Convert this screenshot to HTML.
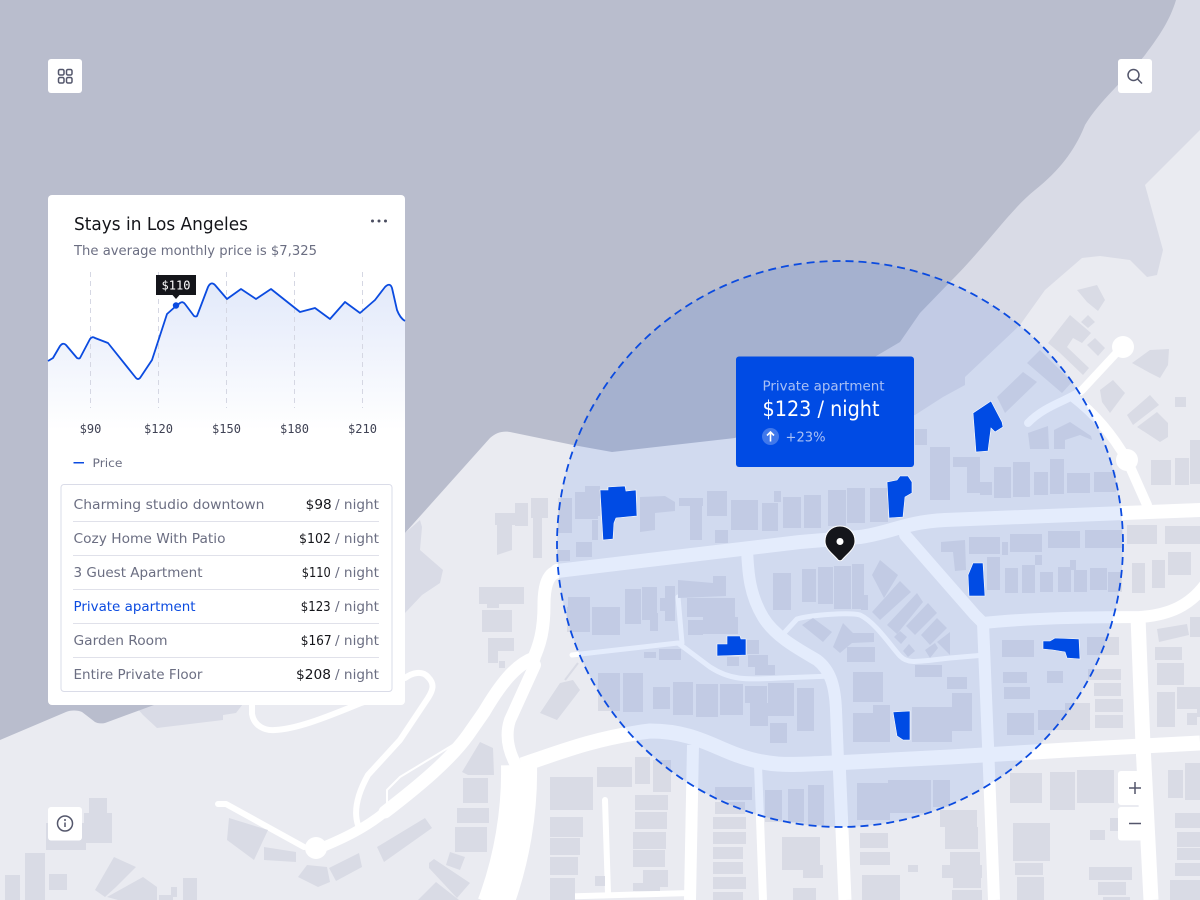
<!DOCTYPE html>
<html><head><meta charset="utf-8"><title>Stays in Los Angeles</title>
<style>
html,body{margin:0;padding:0;width:1200px;height:900px;overflow:hidden;background:#EAEBF1}
svg{display:block;font-family:"DejaVu Sans","Liberation Sans",sans-serif}
.m{font-family:"DejaVu Sans Mono","Liberation Mono",monospace;font-size:12px;fill:#3F4254}
.l{font-size:13.5px;fill:#6B6E82}
.p{font-size:13.5px;fill:#14151A}
</style></head><body>
<svg width="1200" height="900" viewBox="0 0 1200 900" xmlns="http://www.w3.org/2000/svg">
<defs><linearGradient id="g" x1="0" y1="0" x2="0" y2="1"><stop offset="0" stop-color="#E2E9FA"/><stop offset="1" stop-color="#FFFFFF"/></linearGradient></defs>
<rect width="1200" height="900" fill="#EAEBF1"/>
<!-- mid land -->
<path fill="#D9DBE6" d="M1176 0H1200V130L1145 185L1163 250L1157 275L1147 277L1130 260L1100 256L1082 258L1045 290L1020 325L965 377V385L943 397L915 415L800 440L800 300Z"/>
<path fill="#D9DBE6" d="M300 500L405 533L420 520L422 527L420 550L443 570L440 583L422 595L405 613L300 700ZM130 700H246L236 713L223 715V720L157 728L143 715Z"/>
<!-- water -->
<path fill="#B9BDCD" d="M0 0H1176C1170 20 1160 35 1145 55C1125 80 1100 100 1085 125C1075 150 1060 170 1035 190C1010 210 987 245 950 282L920 313L900 342L878 355L800 400L735 438L612 452L573 445L510 432C503 431 497 432 490 438L405 533L154 705L105 723C100 724 97 723 95 722L82 712C78 710 70 710 66 712L0 740Z"/>
<!-- roads -->
<g fill="none" stroke="#fff" stroke-linecap="round" stroke-linejoin="round">
<path stroke-width="14" d="M557 571L800 542L860 537C890 533 905 522 945 520L1200 510"/>
<path stroke-width="13" d="M560 571C548 572 544 585 544 605C544 630 540 645 532 662"/>
<path stroke-width="13" d="M534 658C515 665 500 685 484 712L468 735C450 760 420 785 385 812"/>
<path stroke-width="10" d="M385 812C365 828 345 838 318 849"/>
<path stroke-width="12" d="M535 665L510 720C505 735 508 750 516 765"/>
<path stroke-width="36" stroke-linecap="butt" d="M519 765C520 810 512 860 495 905"/>
<path stroke-width="15" stroke-linecap="butt" d="M522 765C565 750 600 737 650 731C690 731 710 745 737 755C770 767 790 765 833 763L950 757L1067 750L1200 743"/>
<path stroke-width="6" d="M405 678C412 673 422 670 428 677C435 684 433 690 428 698L400 740L368 775C358 793 353 810 358 825"/>
<path stroke-width="6" d="M252 705V714C254 726 265 731 275 730C295 729 320 720 361 703L395 692"/>
<path stroke-width="6" d="M218 804H226L304 847"/>
<path stroke-width="2" d="M461 740L400 777L387 790V807"/>
<circle cx="316" cy="848" r="11" fill="#fff" stroke="none"/>
<path stroke-width="12" stroke-linecap="butt" d="M693 745L690 900"/>
<path stroke-width="8" stroke-linecap="butt" d="M758 765L763 900"/>
<path stroke-width="13" stroke-linecap="butt" d="M839 760L845 900"/>
<path stroke-width="12" stroke-linecap="butt" d="M983 623L988 745L994 900"/>
<path stroke-width="15" stroke-linecap="butt" d="M1138 617L1143 745L1151 900"/>
<path stroke-width="12" d="M905 535L975 615L983 623C1030 618 1090 617 1140 617C1170 615 1190 605 1205 585"/>
<path stroke-width="12" d="M747 548C748 575 750 595 763 617C775 637 800 650 817 660C830 670 835 685 836 710L838 760"/>
<path stroke-width="5" d="M785 632L797 619C810 615 850 612 860 615C875 622 890 645 900 656C908 664 915 662 950 658L985 655"/>
<path stroke-width="5" d="M572 655L678 643L710 667C730 680 745 680 780 678L832 676"/>
<path stroke-width="5" d="M678 597L682 643"/>
<path stroke-width="8" d="M1122 347L1082 390C1070 400 1045 405 1028 423"/>
<path stroke-width="10" d="M1073 397C1090 410 1110 430 1127 460L1147 505"/>
<circle cx="1123" cy="347" r="11" fill="#fff" stroke="none"/>
<circle cx="1127" cy="460" r="11" fill="#fff" stroke="none"/>
<path stroke-width="6" d="M605 800L608 893"/>
<path stroke-width="6" stroke-linecap="butt" d="M550 897L690 893"/>
</g>
<!-- buildings -->
<path d="M578 663L565 680" stroke="#D9DBE5" stroke-width="2" fill="none"/>
<path fill="#D9DBE5" d="M558 498h14v35h-14zM575 492h23v27h-23zM585 486h15v30h-15zM592 520h6v20h-6zM557 550h13v11h-13zM576 542h16v15h-16z
M640 497L665 496L675 502V511L655 513V530L640 532ZM679 498h24v8h-24zM690 505h12v35h-12zM707 491h20v25h-20zM715 530h13v13h-13zM731 500h27v30h-27zM762 503h16v28h-16zM774 491h7v11h-7zM783 497h18v31h-18zM804 495h17v33h-17zM828 490h18v36h-18zM847 488h18v35h-18zM870 488h18v34h-18zM915 429h12v16h-12zM930 447h20v53h-20zM953 457h27v10h-27zM967 467h13v26h-13zM980 482h12v13h-12zM994 467h17v31h-17zM1013 462h17v35h-17zM1034 472h14v23h-14zM1050 459h14v35h-14zM1067 473h23v20h-23zM1094 472h22v20h-22zM1151 460h20v25h-20zM1175 458h14v27h-14zM1190 440h10v44h-10z
M997 397L1023 372L1037 382L1005 413ZM1027 363L1040 350L1072 382L1062 393ZM1048 343L1070 315L1091 333L1082 343L1073 338L1067 347L1089 368L1083 375L1060 353ZM1095 338L1105 348L1098 356L1087 345ZM1088 315L1095 322L1088 328L1081 322ZM1077 290L1097 285L1105 300L1098 311L1087 302ZM1132 363L1150 350L1169 349L1168 365L1160 378L1150 373ZM1100 390L1113 380L1125 393L1110 413L1102 402ZM1127 415L1150 395L1159 405L1133 425ZM1137 427L1157 412L1168 423V437L1160 442ZM1175 397h11v10h-11z
M1028 433L1048 426L1049 449L1030 449ZM1054 449V430L1070 422L1091 436L1092 440L1080 435L1065 440V449Z
M941 542L965 540L966 570L955 571L953 552L941 552ZM969 537h31v17h-31zM1002 542h6v13h-6zM1010 534h32v18h-32zM1048 531h32v17h-32zM1085 530h37v18h-37zM1127 525h30v19h-30zM1165 526h35v18h-35zM1168 552h23v23h-23zM987 557h13v33h-13zM1005 568h13v25h-13zM1022 565h13v28h-13zM1035 555h7v10h-7zM1040 572h13v20h-13zM1058 567h13v25h-13zM1070 560h6v10h-6zM1074 570h13v22h-13zM1090 568h17v22h-17zM1108 572h14v20h-14zM1132 563h13v30h-13zM1152 560h13v28h-13z
M573 597h17v35h-17zM567 607h10v25h-10zM592 607h28v28h-28zM625 589h16v35h-16zM642 587h15v33h-15zM650 613h8v18h-8zM665 586h10v35h-10zM660 598h7v13h-7zM678 580L713 583V576H726V596L678 598ZM687 598h48v19h-48zM703 617h35v17h-35zM688 620h15v15h-15zM747 640h12v14h-12zM727 657h12v9h-12zM748 655h20v12h-20zM755 665h20v10h-20zM644 652h12v6h-12zM659 649h22v11h-22z
M598 673h22v38h-22zM623 673h20v39h-20zM653 687h17v22h-17zM673 682h20v33h-20zM696 684h22v33h-22zM720 684h23v31h-23zM745 686h22v17h-22zM750 703h18v23h-18zM768 683h26v33h-26zM770 723h17v20h-17zM797 688h17v43h-17z
M773 573h18v37h-18zM802 569h14v33h-14zM818 567h15v37h-15zM834 566h17v43h-17zM852 564h12v45h-12zM861 595h7v15h-7z
M872 575L880 560L898 575L884 598ZM872 612L900 581L911 592L880 620ZM887 625L917 593L923 602L897 634ZM906 626L928 603L937 613L915 635ZM921 635L937 618L947 628L930 645ZM894 637L900 631L907 637L901 644ZM903 651L909 644L915 651L908 657ZM925 650L935 643L938 648L930 658ZM937 642L950 632V655Z
M915 665h27v12h-27zM947 677h20v12h-20zM912 707h40v35h-40zM952 693h20v38h-20zM853 672h30v30h-30zM847 647h28v15h-28zM802 625L813 618L832 632L823 642ZM833 647L843 623L853 633H874V642L852 643L840 653ZM853 713h20v29h-20zM873 705h17v37h-17z
M1002 640h32v17h-32zM1087 637h32v18h-32zM1003 672h24v11h-24zM1047 671h16v12h-16zM1004 687h26v12h-26zM1007 713h27v22h-27zM1038 710h27v20h-27zM1065 703h25v27h-25zM1088 669h33v11h-33zM1094 683h27v13h-27zM1095 699h28v13h-28zM1095 715h28v13h-28z
M1157 629L1187 624L1189 635L1159 642ZM1155 647h27v13h-27zM1157 663h27v22h-27zM1157 692h18v35h-18zM1177 687h20v22h-20zM1187 713h10v12h-10zM1190 617h10v20h-10zM1197 687h3v30h-3z
M1010 773h32v30h-32zM1050 772h25v38h-25zM1077 770h37v33h-37zM1168 770h15v28h-15zM1185 763h15v37h-15zM1175 813h25v15h-25zM1177 832h23v15h-23zM1177 848h23v12h-23zM1175 863h25v13h-25zM1170 880h30v20h-30z
M857 783h33v37h-33zM888 780h43v33h-43zM933 780h17v27h-17zM940 810h37v17h-37zM945 827h33v22h-33zM950 852h30v15h-30zM942 865h40v13h-40zM953 878h28v10h-28zM952 890h30v10h-30zM908 865h10v7h-10z
M1013 823h37v38h-37zM1015 863h28v12h-28zM1017 877h27v23h-27zM1090 830h15v10h-15zM1110 818h10v13h-10zM1089 867h43v13h-43zM1098 882h28v13h-28zM1103 897h27v3h-27z
M765 790h17v32h-17zM788 789h16v33h-16zM808 785h16v40h-16zM715 787h37v13h-37zM715 802h30v12h-30zM713 817h33v12h-33zM713 832h33v12h-33zM713 847h30v12h-30zM713 862h30v12h-30zM713 877h33v12h-33zM713 892h30v8h-30z
M782 837h38v33h-38zM793 888h23v12h-23zM803 865h20v13h-20zM860 833h28v15h-28zM860 852h30v13h-30zM862 875h38v25h-38z
M635 757h15v27h-15zM653 760h18v32h-18zM597 767h35v20h-35zM550 777h43v33h-43zM635 795h33v15h-33zM635 812h32v17h-32zM633 832h33v17h-33zM633 850h32v17h-32zM643 870h25v17h-25zM633 883h27v8h-27zM595 876h10v10h-10zM550 817h33v20h-33zM550 838h30v17h-30zM550 857h28v18h-28zM550 878h25v22h-25z
M515 503h13v23h-13zM495 513h33v12h-33zM497 525h15v25l-15 5zM531 498h17v20h-17zM533 517h9v41h-9zM479 587h45v17h-45zM487 603h12v5h-12zM482 610h30v22h-30zM488 638h26v13h-26zM488 650h10v13h-10zM499 661h6v7h-6zM560 683L573 680L580 690L557 720L540 713Z
M568 597h22v35h-22zM229 818L268 830L254 860L227 840ZM264 847L296 852V862L264 860ZM298 877L307 865L327 867L330 882L318 887ZM329 868L359 853L362 867L336 881ZM377 847L425 818L432 828L384 862ZM429 863L434 859L470 883L457 898L429 868ZM418 900L436 882L459 900ZM462 772L480 742L493 748L494 775H468ZM463 778h25v25h-25zM457 808h32v15h-32zM455 827h32v25h-32zM450 852l15 5l-5 13l-14 -5z
M89 798h18v28h-18zM84 813h28v30h-28zM46 823h40v27h-40zM25 853h20v47h-20zM5 875h15v25h-15zM49 874h18v16h-18zM95 890L114 857L136 867L116 887L105 897ZM107 897L143 877L157 887V900H118ZM159 895h14v5h-14zM171 887h6v10h-6zM183 878h14v22h-14z"/>
<!-- radius -->
<circle cx="840" cy="544" r="283" fill="#0050E6" fill-opacity=".105"/>
<circle cx="840" cy="544" r="283" fill="none" stroke="#0B4BE0" stroke-width="1.8" stroke-dasharray="8 5"/>
<!-- highlighted buildings -->
<path fill="#004BE4" stroke="#fff" stroke-width=".6" d="M600 490L608 490V487L625 486L626 491L636 490L637 516L616 518L614 523L613 539L603 540ZM887 482L897 480L900 476H908L912 482V493L905 497L903 517L889 518ZM973 413L991 401L1002 422L1003 427L995 432L991 428L988 451L976 452ZM968 575L973 563H983L985 596L969 596ZM717 644H727V636H740L741 639H746V655L717 656ZM893 712L910 711V740H903L897 736ZM1043 641H1050L1055 638L1079 639L1080 659L1067 658L1065 652L1053 650L1043 649Z"/>
<!-- pin -->
<path fill="#15161B" stroke="#fff" stroke-width="1" d="M840 526C831 526 825 533 825 541C825 549 832 553 838 560C839 561 841 561 842 560C848 553 855 549 855 541C855 533 849 526 840 526Z"/>
<circle cx="840" cy="541.5" r="3.5" fill="#fff"/>
<!-- price tooltip -->
<rect x="736" y="356.5" width="178" height="110.5" rx="3" fill="#004BE4"/>
<text x="762.5" y="390.5" font-size="13.5" fill="#A9C0F5" textLength="122" lengthAdjust="spacingAndGlyphs">Private apartment</text>
<text x="762.5" y="416" font-size="21" fill="#fff" textLength="117" lengthAdjust="spacingAndGlyphs">$123 / night</text>
<circle cx="770.5" cy="436.5" r="8.5" fill="#fff" fill-opacity=".25"/>
<path d="M770.5 441.5V432M767 435.5L770.5 432L774 435.5" fill="none" stroke="#fff" stroke-width="1.6"/>
<text x="785.5" y="441.5" font-size="13.5" fill="#A9C0F5" textLength="40" lengthAdjust="spacingAndGlyphs">+23%</text>
<!-- card -->
<rect x="48" y="195" width="357" height="510" rx="4" fill="#fff"/>
<text x="74" y="230" font-size="17.5" fill="#14151A" textLength="174" lengthAdjust="spacingAndGlyphs">Stays in Los Angeles</text>
<text x="74" y="255" font-size="13.5" fill="#6B6E82" textLength="243" lengthAdjust="spacingAndGlyphs">The average monthly price is $7,325</text>
<g fill="#4A4D60"><circle cx="372.5" cy="221" r="1.5"/><circle cx="379" cy="221" r="1.5"/><circle cx="385.5" cy="221" r="1.5"/></g>
<path fill="url(#g)" d="M48 361L53 358L60 346Q63 342 66 345L77 358Q79 359 80 358L90 339Q92 336 95 338L108 343L136 378Q138 380 140 378L152 360L167 314L176 306L180 303Q183 301 185 304L194 316Q196 317 197 316L208 287Q211 281 215 285L227 299L241 289L256 299L271 289L300 312L315 308L330 319L345 302L360 313L375 300L385 287Q390 282 392 288L397 310Q400 318 405 321V430H48Z"/>
<path d="M90.5 272V408M158.5 272V408M226.5 272V408M294.5 272V408M362.5 272V408" stroke="#D5D7E3" stroke-width="1" stroke-dasharray="5 4" fill="none"/>
<path fill="none" stroke="#0B4BE0" stroke-width="1.8" stroke-linejoin="round" d="M48 361L53 358L60 346Q63 342 66 345L77 358Q79 359 80 358L90 339Q92 336 95 338L108 343L136 378Q138 380 140 378L152 360L167 314L176 306L180 303Q183 301 185 304L194 316Q196 317 197 316L208 287Q211 281 215 285L227 299L241 289L256 299L271 289L300 312L315 308L330 319L345 302L360 313L375 300L385 287Q390 282 392 288L397 310Q400 318 405 321"/>
<circle cx="176" cy="305.5" r="3.2" fill="#0B4BE0"/>
<path fill="#14151A" d="M156 275h40v20h-16.5l-3.500 4l-3.500 -4h-16.500z"/>
<text x="176" y="289.500" class="m" style="fill:#fff" text-anchor="middle">$110</text>
<text x="90.5" y="433" class="m" text-anchor="middle">$90</text>
<text x="158.5" y="433" class="m" text-anchor="middle">$120</text>
<text x="226.5" y="433" class="m" text-anchor="middle">$150</text>
<text x="294.5" y="433" class="m" text-anchor="middle">$180</text>
<text x="362.5" y="433" class="m" text-anchor="middle">$210</text>
<rect x="73.5" y="462" width="10.5" height="1.5" fill="#0B4BE0"/>
<text x="92.5" y="467" font-size="11.5" fill="#6B6E82" textLength="30" lengthAdjust="spacingAndGlyphs">Price</text>
<rect x="61" y="484.5" width="331" height="207" rx="3" fill="#fff" stroke="#DADCE8"/>
<path d="M73 521.5H379M73 555.5H379M73 589.5H379M73 623.5H379M73 657.5H379" stroke="#E0E1EA" stroke-width="1"/>
<text x="73.5" y="509" class="l" textLength="191" lengthAdjust="spacingAndGlyphs">Charming studio downtown</text>
<text x="73.5" y="543" class="l" textLength="152" lengthAdjust="spacingAndGlyphs">Cozy Home With Patio</text>
<text x="73.5" y="577" class="l" textLength="129" lengthAdjust="spacingAndGlyphs">3 Guest Apartment</text>
<text x="73.5" y="611" class="l" style="fill:#0B4BE0" textLength="122" lengthAdjust="spacingAndGlyphs">Private apartment</text>
<text x="73.5" y="645" class="l" textLength="94" lengthAdjust="spacingAndGlyphs">Garden Room</text>
<text x="73.5" y="679" class="l" textLength="129" lengthAdjust="spacingAndGlyphs">Entire Private Floor</text>
<text x="305.7" y="509" class="p" textLength="26" lengthAdjust="spacingAndGlyphs">$98</text>
<text x="299" y="543" class="p" textLength="32" lengthAdjust="spacingAndGlyphs">$102</text>
<text x="301.7" y="577" class="p" textLength="29" lengthAdjust="spacingAndGlyphs">$110</text>
<text x="300.7" y="611" class="p" textLength="30" lengthAdjust="spacingAndGlyphs">$123</text>
<text x="300.7" y="645" class="p" textLength="31" lengthAdjust="spacingAndGlyphs">$167</text>
<text x="296" y="679" class="p" textLength="35" lengthAdjust="spacingAndGlyphs">$208</text>
<text x="335" y="509" class="l" textLength="44" lengthAdjust="spacingAndGlyphs">/ night</text>
<text x="335" y="543" class="l" textLength="44" lengthAdjust="spacingAndGlyphs">/ night</text>
<text x="335" y="577" class="l" textLength="44" lengthAdjust="spacingAndGlyphs">/ night</text>
<text x="335" y="611" class="l" textLength="44" lengthAdjust="spacingAndGlyphs">/ night</text>
<text x="335" y="645" class="l" textLength="44" lengthAdjust="spacingAndGlyphs">/ night</text>
<text x="335" y="679" class="l" textLength="44" lengthAdjust="spacingAndGlyphs">/ night</text>
<!-- buttons -->
<rect x="48" y="59" width="34" height="34" rx="3" fill="#fff"/>
<g fill="none" stroke="#53566B" stroke-width="1.5"><rect x="58.5" y="69.5" width="5.5" height="5.5" rx="1.5"/><rect x="66.5" y="69.5" width="5.5" height="5.5" rx="1.5"/><rect x="58.5" y="77.5" width="5.5" height="5.5" rx="1.5"/><rect x="66.5" y="77.5" width="5.5" height="5.5" rx="1.5"/></g>
<rect x="1118" y="59" width="34" height="34" rx="3" fill="#fff"/>
<g fill="none" stroke="#53566B" stroke-width="1.5"><circle cx="1133.5" cy="75" r="5.5"/><path d="M1137.5 79L1142 83.5"/></g>
<rect x="48" y="807" width="34" height="33.5" rx="3" fill="#fff"/>
<g fill="none" stroke="#53566B" stroke-width="1.5"><circle cx="65" cy="823.5" r="7.5"/><path d="M65 822.5V827"/></g><circle cx="65" cy="820" r="1" fill="#53566B"/>
<rect x="1118" y="771" width="34" height="34" rx="3" fill="#fff"/>
<rect x="1118" y="807" width="34" height="33.5" rx="3" fill="#fff"/>
<path d="M1129 788H1141M1135 782V794M1129 823.5H1141" stroke="#53566B" stroke-width="1.5" fill="none"/>
</svg>
</body></html>
